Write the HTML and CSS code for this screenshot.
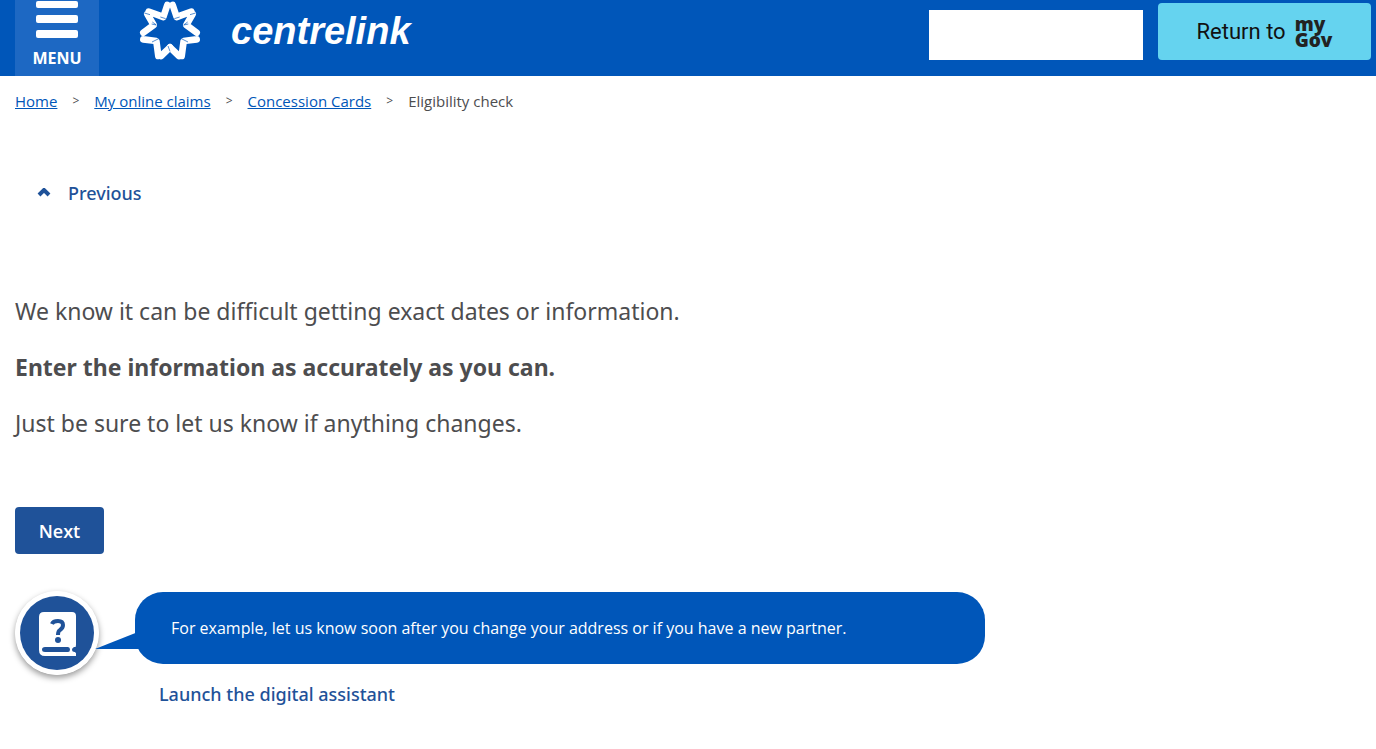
FILE: index.html
```html
<!DOCTYPE html>
<html lang="en">
<head>
    <meta charset="UTF-8">
    <meta name="viewport" content="width=device-width, initial-scale=1.0">
    <title>Eligibility check - Centrelink</title>
    <link rel="stylesheet" href="styles.css">
</head>
<body>

    <header class="header">
        <button type="button" class="menu-btn">
            <svg class="menu-icon" viewBox="0 0 44 38" aria-hidden="true">
                <rect x="1" y="1" width="42" height="7" rx="2"/>
                <rect x="1" y="15" width="42" height="8" rx="2"/>
                <rect x="1" y="30" width="42" height="8" rx="2"/>
            </svg>
            MENU
        </button>
        <a class="brand" href="#">
            <svg class="star" viewBox="0 0 240 210" aria-hidden="true">
                <defs>
                    <g id="half">
                        <path class="arm" d="M128 15L140 51L184 35M188 42L169 75L200 98M200 118L161 123L155 168M147 168L120 142"/>
                        <path class="fold" d="M133 56L149 51M173 66L161 75L175 72M152 115L174 126M120 154L126 138M180 44L197 39"/>
                    </g>
                </defs>
                <use href="#half"/>
                <use href="#half" transform="matrix(-1 0 0 1 240 0)"/>
            </svg>
            <span class="brand-name">centrelink</span>
        </a>
        <div class="user-box"></div>
        <a class="mygov" href="#">
            Return to
            <span class="mygov-logo"><span>my</span><span>Gov</span></span>
        </a>
    </header>

    <nav class="breadcrumb" aria-label="Breadcrumb">
        <a href="#">Home</a>
        <span class="sep">&gt;</span>
        <a href="#">My online claims</a>
        <span class="sep">&gt;</span>
        <a href="#">Concession Cards</a>
        <span class="sep">&gt;</span>
        <span>Eligibility check</span>
    </nav>

    <main class="content">
        <button type="button" class="previous">
            <svg class="chevron" viewBox="0 0 14 10" aria-hidden="true">
                <path d="M2 7L7 2L12 7"/>
            </svg>
            Previous
        </button>

        <div class="message">
            <p>We know it can be difficult getting exact dates or information.</p>
            <p><strong>Enter the information as accurately as you can.</strong></p>
            <p>Just be sure to let us know if anything changes.</p>
        </div>

        <button type="button" class="next">Next</button>

        <section class="assistant">
            <svg class="assistant-icon" viewBox="0 0 84 84" aria-hidden="true">
                <circle cx="42" cy="42" r="42" fill="#fff"/>
                <circle cx="42" cy="42" r="37" fill="#1f5299"/>
                <path fill="#fff" d="M29 21H57Q61 21 61 25V54Q61 57 59 58Q58 60 61 62V65H30Q24 65 24 59V26Q24 21 29 21Z"/>
                <path fill="#1f5299" d="M30 56H53Q55 56 55 58.500Q55 61 53 61H30Q27 61 27 58.500Q27 56 30 56ZM62 56H59Q57 57 57 58.500Q57 61 60 61H62Z"/>
                <path class="question" d="M37 33Q38 30 43 30Q48 30 48 34Q48 37 45 39Q43 40 43 44"/>
                <circle cx="43" cy="49" r="3" fill="#1f5299"/>
            </svg>
            <svg class="tail" viewBox="0 0 48 20" aria-hidden="true">
                <path d="M0 17L48 -2V17Z"/>
            </svg>
            <div class="bubble">For example, let us know soon after you change your address or if you have a new partner.</div>
        </section>
        <a class="launch" href="#">Launch the digital assistant</a>
    </main>

</body>
</html>
```

FILE: styles.css
```css
body {
    margin: 0;
    background-color: #fff;
    color: #4d4d4f;
    font-family: "Open Sans", "Noto Sans", sans-serif;
    font-size: 15px;
}
button {
    border: none;
    font-family: inherit;
    cursor: pointer;
}
a { color: #0056b8; }

.header {
    display: flex;
    align-items: flex-start;
    height: 76px;
    padding: 0 5px 0 15px;
    background-color: #0056b9;
}
.menu-btn {
    display: flex;
    flex-direction: column;
    align-items: center;
    gap: 8px;
    width: 84px;
    height: 76px;
    padding: 0;
    background-color: #1d68c3;
    color: #fff;
    font-size: 16px;
    line-height: 24px;
    font-weight: bold;
}
.menu-icon {
    width: 44px;
    height: 38px;
    fill: #fff;
}
.brand {
    display: flex;
    margin-left: 31px;
    margin-right: auto;
    color: #fff;
    text-decoration: none;
}
.star {
    width: 80px;
    height: 70px;
}
.arm {
    fill: none;
    stroke: #fff;
    stroke-width: 20;
    stroke-linecap: round;
    stroke-linejoin: round;
}
.fold {
    fill: none;
    stroke: #0056b9;
    stroke-width: 2;
}
.brand-name {
    margin-left: 21px;
    font: italic bold 38px/62px "Liberation Sans", Arial, sans-serif;
}
.user-box {
    width: 214px;
    height: 50px;
    margin: 10px 15px 0 0;
    background-color: #fff;
}
.mygov {
    display: flex;
    align-items: center;
    justify-content: center;
    gap: 9px;
    width: 213px;
    height: 57px;
    margin-top: 3px;
    border-radius: 4px;
    background-color: #65d3ef;
    color: #111;
    font-family: Roboto, sans-serif;
    font-size: 22px;
    text-decoration: none;
}
.mygov-logo {
    display: flex;
    flex-direction: column;
    color: #222;
    font-family: "Open Sans", sans-serif;
    font-size: 19px;
    line-height: 16px;
    font-weight: 800;
}

.breadcrumb {
    display: flex;
    align-items: center;
    gap: 15px;
    padding: 15px 15px 0;
    line-height: 20px;
}
.sep { font-size: 12px; }

.content {
    display: flex;
    flex-direction: column;
    align-items: flex-start;
    padding: 68px 15px 36px;
}
.previous {
    display: flex;
    align-items: center;
    gap: 17px;
    padding: 0 22px;
    background: none;
    color: #1f5299;
    font-family: "Noto Sans", sans-serif;
    font-size: 18px;
    line-height: 28px;
    font-weight: 500;
}
.chevron {
    width: 14px;
    height: 10px;
    fill: none;
    stroke: #1f5299;
    stroke-width: 4;
}
.message {
    margin-top: 86px;
    font-family: "Noto Sans", sans-serif;
    font-size: 23px;
    line-height: 36px;
}
.message p { margin: 0 0 20px; }
.next {
    width: 89px;
    height: 47px;
    margin-top: 46px;
    border-radius: 4px;
    background-color: #1f5299;
    color: #fff;
    font-size: 18px;
    font-weight: 600;
}
.assistant {
    display: flex;
    align-items: flex-start;
    width: 100%;
    margin-top: 37px;
}
.assistant-icon {
    flex: none;
    width: 84px;
    height: 84px;
    border-radius: 50%;
    box-shadow: 0 3px 6px rgba(0, 0, 0, 0.4);
}
.question {
    fill: none;
    stroke: #1f5299;
    stroke-width: 4;
}
.tail {
    flex: none;
    width: 48px;
    height: 20px;
    margin: 41px -8px 0 -4px;
    fill: #0056b9;
}
.bubble {
    box-sizing: border-box;
    width: 850px;
    margin-top: 1px;
    padding: 24px 36px;
    border-radius: 28px;
    background-color: #0056b9;
    color: #fff;
    font-size: 16px;
    line-height: 24px;
}
.launch {
    margin: 5px 0 0 144px;
    color: #1f5299;
    font-family: "Noto Sans", sans-serif;
    font-size: 18px;
    line-height: 28px;
    font-weight: 500;
    text-decoration: none;
}
```
